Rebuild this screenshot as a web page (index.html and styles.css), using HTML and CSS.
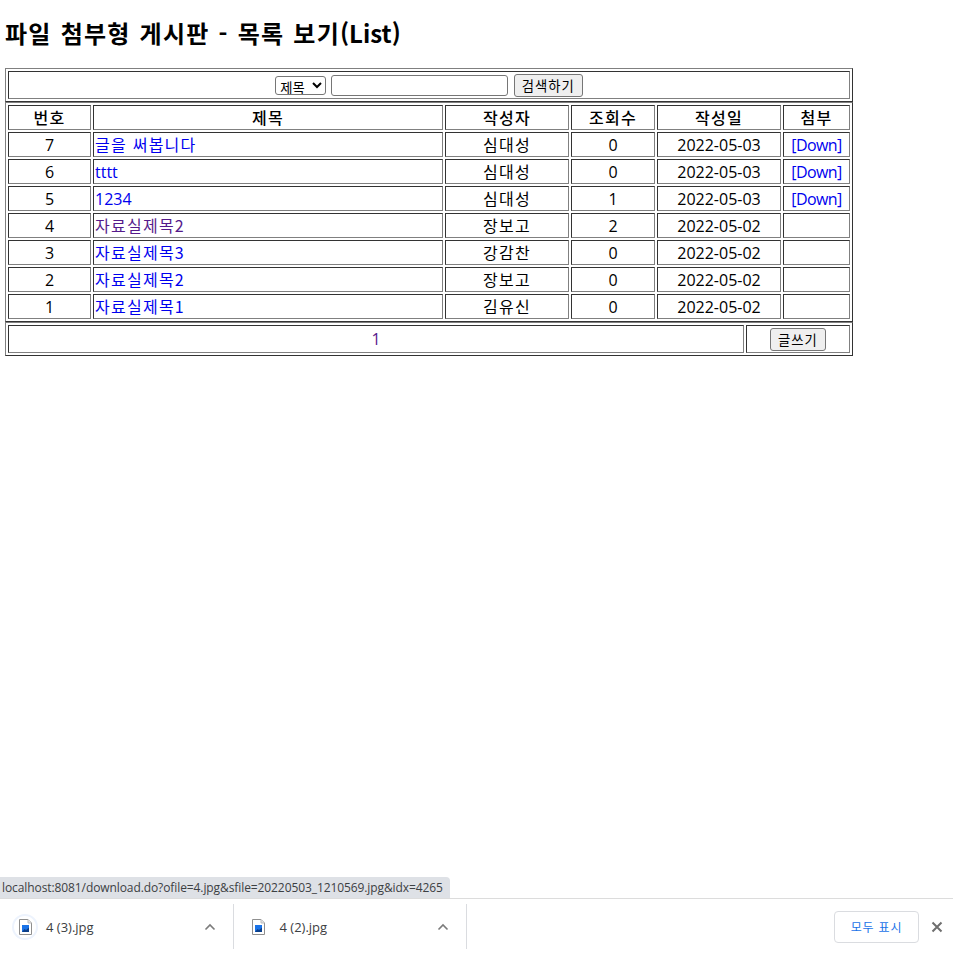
FILE: index.html
```html
<!DOCTYPE html>
<html lang="ko">
<head>
<meta charset="utf-8">
<title>파일 첨부형 게시판</title>
<link rel="stylesheet" href="styles.css">
</head>
<body>
<main class="page">
  <h2 class="title"><span class="ko-title">파일 첨부형 게시판 - 목록 보기</span>(List)</h2>
  <form class="search-form">
    <table class="board">
      <tr>
        <td class="search-cell">
          <select class="search-select"><option>제목</option></select>
          <input class="search-input" type="text">
          <button class="btn search-btn" type="button">검색하기</button>
        </td>
      </tr>
    </table>
  </form>
  <table class="board list">
    <colgroup>
      <col class="c-num"><col class="c-title"><col class="c-author"><col class="c-views"><col class="c-date"><col class="c-file">
    </colgroup>
    <tr><th class="ko">번호</th><th class="ko">제목</th><th class="ko">작성자</th><th class="ko">조회수</th><th class="ko">작성일</th><th class="ko">첨부</th></tr>
    <tr><td>7</td><td class="left ko"><a href="#a">글을 써봅니다</a></td><td class="ko">심대성</td><td>0</td><td>2022-05-03</td><td><a class="down" href="#d">[Down]</a></td></tr>
    <tr><td>6</td><td class="left"><a href="#a">tttt</a></td><td class="ko">심대성</td><td>0</td><td>2022-05-03</td><td><a class="down" href="#d">[Down]</a></td></tr>
    <tr><td>5</td><td class="left"><a href="#a">1234</a></td><td class="ko">심대성</td><td>1</td><td>2022-05-03</td><td><a class="down" href="#d">[Down]</a></td></tr>
    <tr><td>4</td><td class="left ko"><a class="seen" href="#a">자료실제목2</a></td><td class="ko">장보고</td><td>2</td><td>2022-05-02</td><td></td></tr>
    <tr><td>3</td><td class="left ko"><a href="#a">자료실제목3</a></td><td class="ko">강감찬</td><td>0</td><td>2022-05-02</td><td></td></tr>
    <tr><td>2</td><td class="left ko"><a href="#a">자료실제목2</a></td><td class="ko">장보고</td><td>0</td><td>2022-05-02</td><td></td></tr>
    <tr><td>1</td><td class="left ko"><a href="#a">자료실제목1</a></td><td class="ko">김유신</td><td>0</td><td>2022-05-02</td><td></td></tr>
  </table>
  <table class="board pager">
    <tr>
      <td class="pager-cell"><a class="seen" href="#p">1</a></td>
      <td class="write-cell"><button class="btn write-btn" type="button">글쓰기</button></td>
    </tr>
  </table>
</main>
<div class="status">localhost:8081/download.do?ofile=4.jpg&amp;sfile=20220503_1210569.jpg&amp;idx=4265</div>
<footer class="shelf">
  <div class="dl">
    <span class="dl-icon halo">
      <svg width="13" height="16" viewBox="0 0 13 16"><path d="M.5.5h8.500l3.500 3.500v11.500h-12z" fill="#fff" stroke="#8f8f8f"/><path d="M9 .5v3.500h3.500" fill="#e4e4e4" stroke="#bdbdbd"/><rect x="3" y="6" width="7" height="7" fill="#1a73e8"/><path d="M3 13l2.500-3 1.500 1 3-2.500v4.500z" fill="#0b3f8a"/></svg>
    </span>
    <span class="dl-name">4 (3).jpg</span>
    <svg class="chev" width="12" height="8" viewBox="0 0 12 8"><path d="M1.500 6.500L6 2l4.500 4.500" fill="none" stroke="#7b7b7b" stroke-width="1.600"/></svg>
  </div>
  <div class="dl">
    <span class="dl-icon">
      <svg width="13" height="16" viewBox="0 0 13 16"><path d="M.5.5h8.500l3.500 3.500v11.500h-12z" fill="#fff" stroke="#8f8f8f"/><path d="M9 .5v3.500h3.500" fill="#e4e4e4" stroke="#bdbdbd"/><rect x="3" y="6" width="7" height="7" fill="#1a73e8"/><path d="M3 13l2.500-3 1.500 1 3-2.500v4.500z" fill="#0b3f8a"/></svg>
    </span>
    <span class="dl-name">4 (2).jpg</span>
    <svg class="chev" width="12" height="8" viewBox="0 0 12 8"><path d="M1.500 6.500L6 2l4.500 4.500" fill="none" stroke="#7b7b7b" stroke-width="1.600"/></svg>
  </div>
  <div class="shelf-end">
    <button class="show-all" type="button">모두 표시</button>
    <svg class="close" width="12" height="12" viewBox="0 0 12 12"><path d="M1.500 1.500l9 9M10.500 1.500l-9 9" fill="none" stroke="#6f6f6f" stroke-width="2"/></svg>
  </div>
</footer>
</body>
</html>
```

FILE: styles.css
```css
* { box-sizing: border-box; }
html, body { height: 100%; }
body {
  margin: 0;
  display: flex;
  flex-direction: column;
  overflow: hidden;
  font-family: "Open Sans", "Noto Sans CJK KR", sans-serif;
  font-size: 16px;
  color: #000;
  background: #fff;
}
.page { flex: 1; padding: 0 5px; min-height: 0; }
.title {
  margin: 18px 0 20px;
  font-size: 24px;
  line-height: 30px;
  font-weight: 700;
  font-family: "Noto Sans CJK KR", sans-serif;
}
.ko-title { letter-spacing: 1.250px; word-spacing: 1px; }
.search-form { margin: 0; }
.board {
  width: 848px;
  border-collapse: separate;
  border-spacing: 2px;
  border: 1px solid;
  border-color: #808080 #333 #333 #808080;
  table-layout: fixed;
}
.board td, .board th {
  padding: 0 1px;
  height: 25px;
  line-height: 23px;
  text-align: center;
  border: 1px solid;
  border-color: #333 #808080 #808080 #333;
  font-size: 16px;
}
.board th { font-weight: 500; }
.board td.left { text-align: left; }
.board .ko { font-family: "Noto Sans CJK KR", sans-serif; letter-spacing: 1.250px; }
.list td:not(.ko) { padding-top: 1px; line-height: 22px; }
.c-num { width: 83px; }
.c-title { width: 350px; }
.c-author { width: 124px; }
.c-views { width: 84px; }
.c-date { width: 124px; }
.c-file { width: 67px; }
a { color: #0000ee; text-decoration: none; }
a.seen { color: #551a8b; }
a.down { letter-spacing: -0.600px; }
.board td.search-cell { height: 28px; padding: 0; line-height: 0; }
.search-select, .search-input, .btn { vertical-align: middle; font-family: "Noto Sans CJK KR", sans-serif; font-size: 13.330px; }
.search-select { width: 51px; height: 19px; padding: 0; border: 1px solid #767676; border-radius: 3px; background: #fff; color: #000; line-height: 17px; }
.search-input { width: 177px; height: 21px; padding: 1px 2px; border: 1px solid #767676; border-radius: 3px; margin-right: 2px; }
.btn { height: 23px; padding: 0; border: 1px solid #767676; border-radius: 3px; background: #efefef; color: #000; line-height: 19px; letter-spacing: 1px; }
.search-btn { width: 69px; }
.write-btn { width: 56px; }
.list, .pager { margin-top: 0; }
.board td.pager-cell { width: 736px; height: 28px; }
.board td.write-cell { height: 28px; line-height: 0; }
.status {
  position: absolute;
  left: 0;
  top: 877px;
  width: 450px;
  height: 21px;
  padding-left: 2px;
  background: #dee1e6;
  border-top-right-radius: 4px;
  font-family: "Open Sans", sans-serif;
  font-size: 12px;
  letter-spacing: -0.090px;
  line-height: 21px;
  color: #3c4043;
  white-space: nowrap;
  overflow: hidden;
}
.shelf {
  height: 56px;
  flex: none;
  display: flex;
  align-items: center;
  border-top: 1px solid #dcdcdc;
  background: #fff;
}
.dl {
  width: 233.500px;
  height: 45px;
  display: flex;
  align-items: center;
  border-right: 1px solid #dadce0;
  padding-left: 12px;
}
.dl-icon { width: 26px; height: 26px; display: flex; align-items: center; justify-content: center; border-radius: 50%; flex: none; }
.dl-icon.halo { box-shadow: inset 0 0 0 2px #edf3fd; }
.dl-name { margin-left: 8px; flex: 1; font-family: "Open Sans", sans-serif; font-size: 13px; color: #3c4043; }
.chev { margin-right: 17px; flex: none; }
.shelf-end { flex: 1; display: flex; align-items: center; justify-content: flex-end; padding-right: 10px; }
.show-all { width: 85px; height: 32px; background: #fff; border: 1px solid #dadce0; border-radius: 4px; color: #1a73e8; font-family: "Noto Sans CJK KR", sans-serif; font-size: 12px; letter-spacing: 0.800px; padding: 0; }
.close { margin-left: 12px; }
```
